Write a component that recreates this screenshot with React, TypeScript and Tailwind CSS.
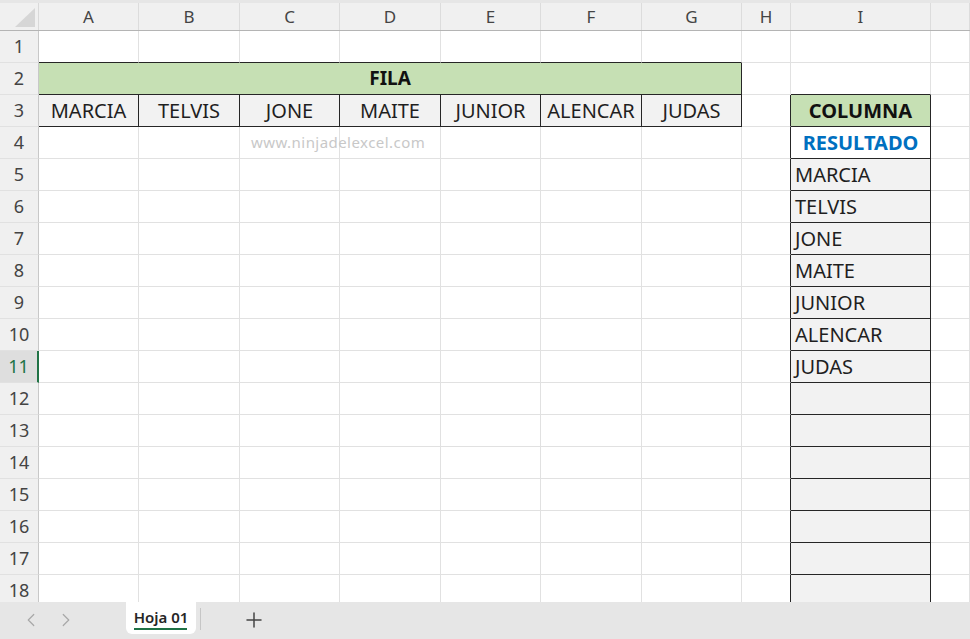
import React from "react";
import { ChevronLeft, ChevronRight, Plus } from "lucide-react";

const cols = ["A", "B", "C", "D", "E", "F", "G", "H", "I", ""];
const fila = ["MARCIA", "TELVIS", "JONE", "MAITE", "JUNIOR", "ALENCAR", "JUDAS"];
const gridCols =
  "grid grid-cols-[39px_100px_101px_100px_101px_100px_101px_100px_49px_140px_1fr]";

function cellClass(r: number, c: number): string {
  // c: 1..10 (A..J)
  let cls = "h-[32px] border-r border-b border-[#e1e1e1] flex items-center overflow-visible whitespace-nowrap ";
  const darkBottom =
    (r >= 1 && r <= 3 && c >= 1 && c <= 7) || (c === 9 && r >= 2 && r <= 18);
  const darkRight =
    (r === 3 && c >= 1 && c <= 7) || ((c === 8 || c === 9) && r >= 3 && r <= 18);
  if (darkBottom) cls += "border-b-[#262626] ";
  if (darkRight) cls += "border-r-[#262626] ";
  if (r === 3 && c <= 7) cls += "bg-[#f2f2f2] justify-center ";
  if (c === 9 && r === 3) cls += "bg-[#c6e0b4] justify-center ";
  if (c === 9 && r >= 5) cls += "bg-[#f2f2f2] ";
  if (c === 9 && r === 4) cls += "justify-center ";
  return cls;
}

export default function App() {
  const rows = Array.from({ length: 18 }, (_, i) => i + 1);
  return (
    <div
      className="w-[970px] h-[639px] flex flex-col overflow-hidden bg-white text-[#1f1f1f]"
      style={{ fontFamily: '"Noto Sans", "Open Sans", sans-serif' }}
    >
      <div className="h-[3px] bg-[#e6e6e6] shrink-0" />
      <div className="flex-1 overflow-hidden relative">
        {/* column header */}
        <div className={`${gridCols} h-[28px] bg-[#f0f0f0] border-b border-[#b4b4b4]`}>
          <div className="border-r border-[#d9d9d9] relative">
            <svg className="absolute left-[14px] top-[5px]" width="22" height="20" viewBox="0 0 22 20">
              <polygon points="21,0 21,19 1,19" fill="#d6d6d6" />
            </svg>
          </div>
          {cols.map((c, i) => (
            <div
              key={i}
              className="flex items-center justify-center border-r border-[#dcdcdc] text-[17px] text-[#444]"
            >
              {c}
            </div>
          ))}
        </div>
        {rows.map((r) => (
          <div key={r} className={gridCols}>
            <div
              className={
                r === 11
                  ? "h-[32px] bg-[#dedede] border-r-2 border-r-[#217346] border-b border-b-[#e1e1e1] flex items-center justify-center text-[18px] text-[#217346]"
                  : "h-[32px] bg-[#f0f0f0] border-r border-r-[#c8c8c8] border-b border-b-[#e1e1e1] flex items-center justify-center text-[18px] text-[#444]"
              }
            >
              {r}
            </div>
            {r === 2 ? (
              <>
                <div className="col-span-7 h-[32px] bg-[#c6e0b4] border-r border-b border-[#262626] flex items-center justify-center font-bold text-[19px] text-[#111]">
                  FILA
                </div>
                {[8, 9, 10].map((c) => (
                  <div key={c} className={cellClass(r, c)} />
                ))}
              </>
            ) : (
              cols.map((_, idx) => {
                const c = idx + 1;
                let content: React.ReactNode = null;
                if (r === 3 && c <= 7) content = <span className="text-[20px]">{fila[c - 1]}</span>;
                if (r === 3 && c === 9)
                  content = <span className="text-[20px] font-bold text-[#111]">COLUMNA</span>;
                if (r === 4 && c === 9)
                  content = <span className="text-[20px] font-bold text-[#0070c0]">RESULTADO</span>;
                if (c === 9 && r >= 5 && r <= 11)
                  content = <span className="text-[20px] pl-[4px]">{fila[r - 5]}</span>;
                if (r === 4 && c === 3)
                  content = (
                    <span className="relative z-10 pl-[11px] text-[15px] text-[#c8c8c8] tracking-[0.45px]">
                      www.ninjadelexcel.com
                    </span>
                  );
                return (
                  <div key={c} className={cellClass(r, c)}>
                    {content}
                  </div>
                );
              })
            )}
          </div>
        ))}
      </div>
      {/* sheet tabs */}
      <div className="h-[37px] shrink-0 bg-[#e6e6e6] flex items-start">
        <div className="flex items-center h-[35px] pl-[20px] gap-[13px] text-[#a8a8a8]">
          <ChevronLeft size={22} strokeWidth={1.3} />
          <ChevronRight size={22} strokeWidth={1.3} />
        </div>
        <div className="ml-[49px] w-[70px] h-[32px] bg-white rounded-b-[6px] flex flex-col items-center justify-center relative">
          <span className="text-[15px] font-semibold text-[#262626] leading-none mb-[2px]">Hoja 01</span>
          <div className="absolute bottom-[4px] left-[8px] right-[9px] h-[2px] bg-[#1e7145]" />
        </div>
        <div className="ml-[4px] mt-[6px] w-px h-[22px] bg-[#c6c6c6]" />
        <div className="ml-[41px] h-[35px] flex items-center text-[#444]">
          <Plus size={24} strokeWidth={1.5} />
        </div>
      </div>
    </div>
  );
}
